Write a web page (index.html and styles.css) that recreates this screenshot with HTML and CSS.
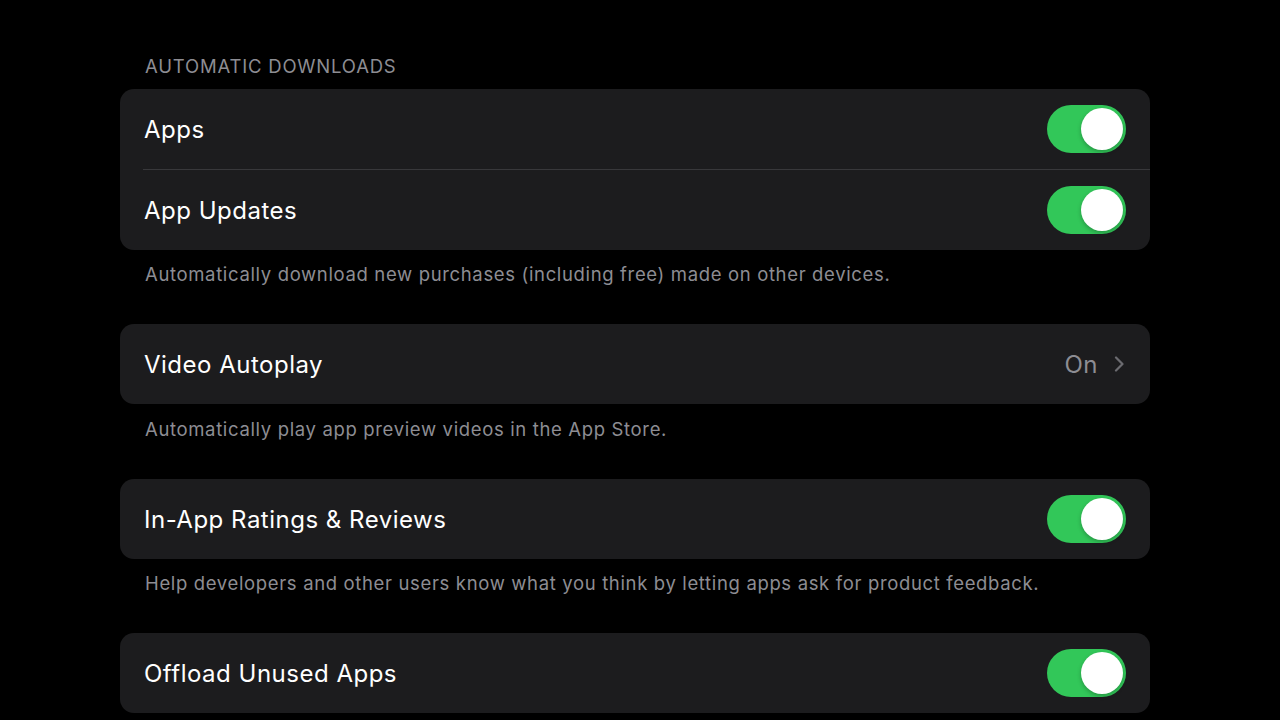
FILE: index.html
```html
<!DOCTYPE html>
<html>
<head>
<meta charset="utf-8">
<link rel="stylesheet" href="styles.css">
</head>
<body>
<div class="page">
  <div class="section-header">AUTOMATIC DOWNLOADS</div>
  <div class="card">
    <div class="row">
      <span class="label">Apps</span>
      <span class="toggle"><span class="knob"></span></span>
    </div>
    <div class="row sep">
      <span class="label">App Updates</span>
      <span class="toggle"><span class="knob"></span></span>
    </div>
  </div>
  <div class="footnote">Automatically download new purchases (including free) made on other devices.</div>

  <div class="card">
    <div class="row">
      <span class="label">Video Autoplay</span>
      <span class="detail">
        <span class="value">On</span>
        <svg class="chevron" width="10" height="16" viewBox="0 0 10 16"><path d="M2 1.5 L8.5 8 L2 14.5" fill="none" stroke="#6b6b70" stroke-width="2.2" stroke-linecap="round" stroke-linejoin="round"/></svg>
      </span>
    </div>
  </div>
  <div class="footnote">Automatically play app preview videos in the App Store.</div>

  <div class="card">
    <div class="row">
      <span class="label">In-App Ratings &amp; Reviews</span>
      <span class="toggle"><span class="knob"></span></span>
    </div>
  </div>
  <div class="footnote">Help developers and other users know what you think by letting apps ask for product feedback.</div>

  <div class="card">
    <div class="row">
      <span class="label">Offload Unused Apps</span>
      <span class="toggle"><span class="knob"></span></span>
    </div>
  </div>
</div>
</body>
</html>
```

FILE: styles.css
```css
html, body {
  margin: 0;
  padding: 0;
  background: #000;
  height: 100%;
  overflow: hidden;
}

.page {
  width: 1030px;
  margin-left: 120px;
  padding-top: 54px;
  font-family: Inter, "Noto Sans", "Liberation Sans", sans-serif;
  -webkit-font-smoothing: antialiased;
}

.section-header {
  color: #8d8d93;
  font-size: 18.5px;
  line-height: 24px;
  letter-spacing: 0.8px;
  padding-left: 25px;
  margin-bottom: 11px;
}

.card {
  background: #1c1c1e;
  border-radius: 14px;
  overflow: hidden;
}

.row {
  height: 80px;
  display: flex;
  align-items: center;
  justify-content: space-between;
  padding: 0 24px;
  position: relative;
}

.row.sep {
  height: 81px;
  padding-top: 1px;
  box-sizing: border-box;
}

.row.sep::before {
  content: "";
  position: absolute;
  top: 0;
  left: 23px;
  right: 0;
  height: 1px;
  background: #38383b;
}

.label {
  color: #fff;
  font-size: 24px;
  letter-spacing: 0.5px;
  padding-top: 1px;
}

.toggle {
  width: 79px;
  height: 48px;
  border-radius: 24px;
  background: #32c759;
  display: flex;
  align-items: center;
  justify-content: flex-end;
  padding-right: 3px;
  box-sizing: border-box;
}

.knob {
  width: 42px;
  height: 42px;
  border-radius: 50%;
  background: #fff;
  box-shadow: 0 2px 4px rgba(0,0,0,0.25);
}

.detail {
  display: flex;
  align-items: center;
  gap: 16px;
}

.value {
  color: #8d8d93;
  font-size: 24px;
  letter-spacing: 0.5px;
  padding-top: 1px;
}

.chevron {
  margin-right: 2px;
}

.footnote {
  color: #8d8d93;
  font-size: 18.5px;
  line-height: 24px;
  letter-spacing: 0.65px;
  padding: 12.3px 0 0 25px;
  margin-bottom: 38.1px;
}
```
